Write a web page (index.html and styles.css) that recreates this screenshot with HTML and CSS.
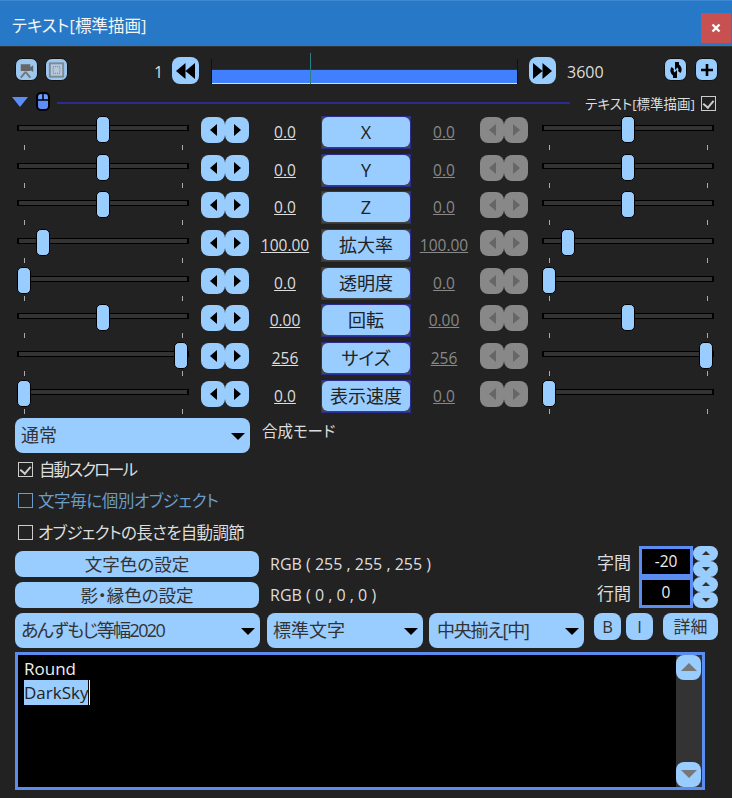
FILE: index.html
```html
<!DOCTYPE html>
<html lang="ja">
<head>
    <meta charset="UTF-8">
    <title>テキスト[標準描画]</title>
    <link rel="stylesheet" href="styles.css">
</head>
<body>
    <div class="titlebar">
        <span class="title">テキスト[標準描画]</span>
        <div class="close">
            <svg width="10" height="10" viewBox="0 0 10 10"><path d="M1.5 1.5 8.5 8.5M8.5 1.5 1.5 8.5" stroke="#fff" stroke-width="2.4"/></svg>
        </div>
    </div>

    <div class="toolbar">
        <div class="icon-btn dim">
            <svg width="22" height="22" viewBox="0 0 22 22"><path d="M5 5h10v3l3-2v7l-3-2v1H5z" fill="#666"/><path d="M10 13 5 19M10 13l5 6" stroke="#777" stroke-width="2"/></svg>
        </div>
        <div class="icon-btn dim">
            <svg width="22" height="22" viewBox="0 0 22 22"><rect x="4" y="4" width="14" height="14" fill="#b4c8dc" stroke="#808890" stroke-width="2"/><rect x="7.5" y="7.5" width="7" height="7" fill="none" stroke="#778" stroke-dasharray="1 1"/></svg>
        </div>
        <span class="frame-start">1</span>
        <div class="jump-btn">
            <svg width="19" height="16" viewBox="0 0 19 16"><path d="M9.5 0v16L0 8zM19 0v16L9.5 8z" fill="#000"/></svg>
        </div>
        <div class="timeline">
            <div class="cursor"></div>
            <div class="range"></div>
        </div>
        <div class="jump-btn">
            <svg width="19" height="16" viewBox="0 0 19 16"><path d="M0 0v16L9.5 8zM9.5 0v16L19 8z" fill="#000"/></svg>
        </div>
        <span class="frame-end">3600</span>
        <div class="icon-btn loop">
            <svg width="16" height="16" viewBox="0 0 16 16"><path d="M11 0v2.500A6 6 0 0 1 12.500 11L10 9a3 3 0 0 0-.5-3.500L7 8V0zM5 16v-2.500A6 6 0 0 1 3.500 5L6 7a3 3 0 0 0 .5 3.500L9 8v8z" fill="#000"/></svg>
        </div>
        <div class="icon-btn">
            <svg width="14" height="14" viewBox="0 0 14 14"><path d="M7 1v12M1 7h12" stroke="#000" stroke-width="2.6"/></svg>
        </div>
    </div>

    <div class="group-row">
        <span class="fold"></span>
        <svg class="mouse" width="14" height="19" viewBox="0 0 14 19"><rect x="1" y="1" width="12" height="17" rx="4" fill="#5b8cf8" stroke="#000" stroke-width="2"/><path d="M1 8h12M7 1v7" stroke="#000" stroke-width="1.500"/><path d="M3 3h3v4H3zM8 3h3v4H8z" fill="#6f9ff8"/></svg>
        <div class="group-line"></div>
        <span class="group-name">テキスト[標準描画]</span>
        <span class="check on small"></span>
    </div>

    <div class="params">
        <div class="slider"><span class="track"></span><span class="thumb" style="--pos: 0.5"></span><i class="tick"></i><i class="tick"></i></div>
        <div class="arrows"><span class="arrow left"></span><span class="arrow right"></span></div>
        <a class="value">0.0</a>
        <div class="param-btn"><span>X</span></div>
        <a class="value muted">0.0</a>
        <div class="arrows off"><span class="arrow left"></span><span class="arrow right"></span></div>
        <div class="slider"><span class="track"></span><span class="thumb" style="--pos: 0.5"></span><i class="tick"></i><i class="tick"></i></div>

        <div class="slider"><span class="track"></span><span class="thumb" style="--pos: 0.5"></span><i class="tick"></i><i class="tick"></i></div>
        <div class="arrows"><span class="arrow left"></span><span class="arrow right"></span></div>
        <a class="value">0.0</a>
        <div class="param-btn"><span>Y</span></div>
        <a class="value muted">0.0</a>
        <div class="arrows off"><span class="arrow left"></span><span class="arrow right"></span></div>
        <div class="slider"><span class="track"></span><span class="thumb" style="--pos: 0.5"></span><i class="tick"></i><i class="tick"></i></div>

        <div class="slider"><span class="track"></span><span class="thumb" style="--pos: 0.5"></span><i class="tick"></i><i class="tick"></i></div>
        <div class="arrows"><span class="arrow left"></span><span class="arrow right"></span></div>
        <a class="value">0.0</a>
        <div class="param-btn"><span>Z</span></div>
        <a class="value muted">0.0</a>
        <div class="arrows off"><span class="arrow left"></span><span class="arrow right"></span></div>
        <div class="slider"><span class="track"></span><span class="thumb" style="--pos: 0.5"></span><i class="tick"></i><i class="tick"></i></div>

        <div class="slider"><span class="track"></span><span class="thumb" style="--pos: 0.12"></span><i class="tick"></i><i class="tick"></i></div>
        <div class="arrows"><span class="arrow left"></span><span class="arrow right"></span></div>
        <a class="value">100.00</a>
        <div class="param-btn"><span>拡大率</span></div>
        <a class="value muted">100.00</a>
        <div class="arrows off"><span class="arrow left"></span><span class="arrow right"></span></div>
        <div class="slider"><span class="track"></span><span class="thumb" style="--pos: 0.12"></span><i class="tick"></i><i class="tick"></i></div>

        <div class="slider"><span class="track"></span><span class="thumb" style="--pos: 0"></span><i class="tick"></i><i class="tick"></i></div>
        <div class="arrows"><span class="arrow left"></span><span class="arrow right"></span></div>
        <a class="value">0.0</a>
        <div class="param-btn"><span>透明度</span></div>
        <a class="value muted">0.0</a>
        <div class="arrows off"><span class="arrow left"></span><span class="arrow right"></span></div>
        <div class="slider"><span class="track"></span><span class="thumb" style="--pos: 0"></span><i class="tick"></i><i class="tick"></i></div>

        <div class="slider"><span class="track"></span><span class="thumb" style="--pos: 0.5"></span><i class="tick"></i><i class="tick"></i></div>
        <div class="arrows"><span class="arrow left"></span><span class="arrow right"></span></div>
        <a class="value">0.00</a>
        <div class="param-btn"><span>回転</span></div>
        <a class="value muted">0.00</a>
        <div class="arrows off"><span class="arrow left"></span><span class="arrow right"></span></div>
        <div class="slider"><span class="track"></span><span class="thumb" style="--pos: 0.5"></span><i class="tick"></i><i class="tick"></i></div>

        <div class="slider"><span class="track"></span><span class="thumb" style="--pos: 1"></span><i class="tick"></i><i class="tick"></i></div>
        <div class="arrows"><span class="arrow left"></span><span class="arrow right"></span></div>
        <a class="value">256</a>
        <div class="param-btn"><span>サイズ</span></div>
        <a class="value muted">256</a>
        <div class="arrows off"><span class="arrow left"></span><span class="arrow right"></span></div>
        <div class="slider"><span class="track"></span><span class="thumb" style="--pos: 1"></span><i class="tick"></i><i class="tick"></i></div>

        <div class="slider"><span class="track"></span><span class="thumb" style="--pos: 0"></span><i class="tick"></i><i class="tick"></i></div>
        <div class="arrows"><span class="arrow left"></span><span class="arrow right"></span></div>
        <a class="value">0.0</a>
        <div class="param-btn"><span>表示速度</span></div>
        <a class="value muted">0.0</a>
        <div class="arrows off"><span class="arrow left"></span><span class="arrow right"></span></div>
        <div class="slider"><span class="track"></span><span class="thumb" style="--pos: 0"></span><i class="tick"></i><i class="tick"></i></div>
    </div>

    <div class="blend-row">
        <div class="select blend">通常<span class="caret"></span></div>
        <span class="blend-label">合成モード</span>
    </div>

    <div class="check-row first"><span class="check on"></span>自動スクロール</div>
    <div class="check-row blue"><span class="check"></span>文字毎に個別オブジェクト</div>
    <div class="check-row last"><span class="check"></span>オブジェクトの長さを自動調節</div>

    <div class="color-area">
        <div class="color-rows">
            <div class="color-row"><div class="wide-btn">文字色の設定</div><span class="rgb">RGB ( 255 , 255 , 255 )</span></div>
            <div class="color-row"><div class="wide-btn">影・縁色の設定</div><span class="rgb">RGB ( 0 , 0 , 0 )</span></div>
        </div>
        <div class="spin-rows">
            <div class="spin-row">
                <span class="spin-label">字間</span>
                <div class="spin-input">-20</div>
                <div class="spin"><span class="up"></span><span class="down"></span></div>
            </div>
            <div class="spin-row">
                <span class="spin-label">行間</span>
                <div class="spin-input">0</div>
                <div class="spin"><span class="up"></span><span class="down"></span></div>
            </div>
        </div>
    </div>

    <div class="font-row">
        <div class="select font">あんずもじ等幅2020<span class="caret"></span></div>
        <div class="select style">標準文字<span class="caret"></span></div>
        <div class="select align">中央揃え[中]<span class="caret"></span></div>
        <div class="small-btn bold">B</div>
        <div class="small-btn italic">I</div>
        <div class="small-btn detail">詳細</div>
    </div>

    <div class="editor">
        <div class="editor-text">
            <div class="line">Round</div>
            <div class="line"><span class="selected">DarkSky</span><span class="text-cursor"></span></div>
        </div>
        <div class="scrollbar">
            <div class="scroll-btn"><span class="scroll-up"></span></div>
            <div class="scroll-btn"><span class="scroll-down"></span></div>
        </div>
    </div>
</body>
</html>
```

FILE: styles.css
```css
* {
    box-sizing: border-box;
}

body {
    margin: 0;
    width: 732px;
    height: 798px;
    overflow: hidden;
    background-color: #222;
    color: #ddd;
    font-family: "Open Sans", "Noto Sans CJK JP", sans-serif;
    font-size: 16px;
    font-feature-settings: "palt";
}

/* title bar */
.titlebar {
    height: 47px;
    background-color: #2878c8;
    border-top: 1px solid #3d88d2;
    border-bottom: 1px solid #333;
    display: flex;
    justify-content: space-between;
    padding: 12px 1px 0 12px;
    color: #f4f4f4;
}

.title {
    font-size: 16.5px;
    line-height: 25px;
}

.close {
    width: 30px;
    height: 30px;
    background-color: #c75050;
    display: flex;
    align-items: center;
    justify-content: center;
}

/* top toolbar */
.toolbar {
    height: 43px;
    padding: 10px 0 0 15px;
    display: flex;
    align-items: flex-start;
}

.icon-btn {
    width: 23px;
    height: 23px;
    border-radius: 7px;
    background-color: #99ccff;
    border: 1px solid #111;
    display: flex;
    align-items: center;
    justify-content: center;
    margin-top: 1px;
    margin-right: 8px;
}

.icon-btn.dim {
    background-color: #9cc8f0;
    margin-right: 7px;
}

.icon-btn.loop {
    margin-left: 60px;
}

.frame-start {
    margin-left: 79px;
    width: 18px;
    line-height: 28px;
    margin-top: 1px;
}

.jump-btn {
    width: 27px;
    height: 27px;
    border-radius: 8px;
    background-color: #99ccff;
    display: flex;
    align-items: center;
    justify-content: center;
}

.timeline {
    position: relative;
    width: 307px;
    height: 25px;
    margin: 2px 11px 0 12px;
    border-left: 1px solid #111;
    border-right: 1px solid #111;
    padding-top: 10px;
}

.timeline .range {
    height: 15px;
    background-color: #4080ff;
    border-top: 1px solid #1a2f60;
    border-bottom: 1px solid #ddd;
}

.timeline .cursor {
    position: absolute;
    left: 98px;
    top: -6px;
    width: 1px;
    height: 31px;
    background-color: #2a8080;
    z-index: 1;
}

.frame-end {
    margin-left: 11px;
    line-height: 28px;
    margin-top: 1px;
    width: 37px;
}

/* object group */
.group-row {
    height: 26px;
    padding: 0 16px 0 12px;
    display: flex;
    align-items: center;
}

.fold {
    width: 0;
    height: 0;
    border-left: 8.5px solid transparent;
    border-right: 8.5px solid transparent;
    border-top: 10px solid #5b8cf8;
    margin-top: -3px;
}

.mouse {
    margin-left: 8px;
    margin-top: -4px;
}

.group-line {
    flex: 1;
    height: 2px;
    margin: -1px 15px 0 7px;
    background-color: #2c2c90;
}

.group-name {
    font-size: 13.5px;
    line-height: 20px;
    margin-top: 2px;
    margin-right: 6px;
}

/* parameter rows */
.params {
    padding-left: 15px;
    display: grid;
    grid-template-columns: 175px 59px 72px 90px 66px 51px 188px;
    grid-auto-rows: 37.7px;
}

.slider {
    position: relative;
    width: 175px;
    height: 37px;
    display: flex;
    justify-content: space-between;
    justify-self: end;
    padding: 29px 7px 0 9px;
}

.slider:nth-child(7n) {
    margin-right: 1px;
}

.track {
    position: absolute;
    left: 2px;
    right: 1px;
    top: 9px;
    height: 6px;
    background-color: #333;
    border: 1px solid #000;
    border-left-width: 2px;
    border-right-width: 2px;
}

.thumb {
    position: absolute;
    top: 0;
    left: calc(2px + var(--pos) * 157px);
    width: 14px;
    height: 27px;
    background-color: #99ccff;
    border: 1px solid #000;
    border-radius: 5px;
}

.tick {
    width: 1px;
    height: 5px;
    background-color: #aaa;
}

.arrows {
    display: flex;
    justify-content: flex-end;
    align-items: flex-start;
    padding-top: 1px;
}

.arrow {
    width: 24px;
    height: 26px;
    background-color: #99ccff;
    border-radius: 8px;
    display: flex;
    align-items: center;
    justify-content: center;
}

.arrow::before {
    content: "";
    border-top: 6.5px solid transparent;
    border-bottom: 6.5px solid transparent;
}

.arrow.left::before {
    border-right: 7px solid #000;
}

.arrow.right::before {
    border-left: 7px solid #000;
}

.arrows.off .arrow {
    background-color: #888;
}

.arrows.off .arrow.left::before {
    border-right-color: #666;
}

.arrows.off .arrow.right::before {
    border-left-color: #666;
}

.value {
    text-align: center;
    text-decoration: underline;
    font-size: 15.5px;
    line-height: 33px;
    color: #ddd;
}

.value.muted {
    color: #888;
}

.param-btn {
    height: 33px;
    background-color: #444;
    border: 1px solid #2c2c90;
    padding-bottom: 1px;
}

.param-btn span {
    display: block;
    height: 100%;
    background-color: #99ccff;
    border-radius: 6px;
    color: #222;
    text-align: center;
    font-size: 18px;
    line-height: 31px;
}

/* blend mode */
.blend-row {
    padding-left: 15px;
    display: flex;
}

.select {
    position: relative;
    height: 35px;
    background-color: #99ccff;
    border-radius: 8px;
    color: #333;
    font-size: 18px;
    line-height: 35px;
    padding-left: 6px;
}

.caret {
    position: absolute;
    right: 5px;
    top: 15px;
    border-left: 7.5px solid transparent;
    border-right: 7.5px solid transparent;
    border-top: 7px solid #000;
}

.select.blend {
    width: 235px;
}

.blend-label {
    margin-left: 12px;
    font-size: 15.5px;
    line-height: 27px;
}

.check-row {
    display: flex;
    align-items: center;
    height: 31px;
    padding-left: 18px;
    font-size: 16.5px;
}

.check-row.first {
    margin-top: 1px;
    letter-spacing: -1.9px;
}

.check-row.first .check {
    margin-right: 6px;
}

.check-row.blue {
    color: #6a9cc8;
    letter-spacing: -0.4px;
}

.check-row.blue .check {
    border-color: #6a9cc8;
    margin-right: 5px;
}

.check-row.last {
    height: 32px;
    padding-top: 1px;
    letter-spacing: -0.65px;
}

.check-row.last .check {
    margin-right: 5px;
}

.check {
    width: 15px;
    height: 15px;
    border: 1px solid #ccc;
    margin-right: 7px;
    position: relative;
    flex-shrink: 0;
}

.check.small {
    margin-right: 0;
}

.check.on::after {
    content: "";
    position: absolute;
    left: 3px;
    top: 1px;
    width: 5px;
    height: 8px;
    border-right: 2px solid #ccc;
    border-bottom: 2px solid #ccc;
    transform: rotate(40deg);
}

/* colours and spacing */
.color-area {
    display: flex;
    padding: 0 14px 0 15px;
    justify-content: space-between;
    height: 65px;
}

.color-rows {
    padding-top: 3px;
}

.color-row {
    display: flex;
    align-items: center;
    height: 26px;
    margin-bottom: 5px;
}

.wide-btn {
    width: 244px;
    height: 26px;
    background-color: #99ccff;
    border-radius: 8px;
    color: #333;
    text-align: center;
    line-height: 26px;
    font-size: 17.5px;
}

.rgb {
    margin-left: 11px;
    font-size: 16px;
}

.spin-rows {
    margin-top: -2px;
}

.spin-row {
    display: flex;
    align-items: center;
    height: 31px;
}

.spin-label {
    font-size: 17px;
    width: 42px;
}

.spin-input {
    width: 54px;
    height: 31px;
    background-color: #000;
    border: 3px solid #5b8cf0;
    text-align: center;
    line-height: 25px;
    color: #eee;
    font-size: 15.5px;
}

.spin {
    width: 25px;
    display: flex;
    flex-direction: column;
}

.spin span {
    height: 15.5px;
    background-color: #99ccff;
    border-radius: 8px;
    display: flex;
    align-items: center;
    justify-content: center;
}

.spin span::before {
    content: "";
    border-left: 4.5px solid transparent;
    border-right: 4.5px solid transparent;
}

.spin .up::before {
    border-bottom: 4px solid #333;
}

.spin .down::before {
    border-top: 4px solid #333;
}

/* font row */
.font-row {
    display: flex;
    padding-left: 15px;
    height: 39px;
    align-items: flex-start;
}

.select.font {
    width: 245px;
    letter-spacing: -1.6px;
}

.select.style {
    width: 156px;
    margin-left: 7px;
}

.select.align {
    width: 155px;
    margin-left: 6px;
    padding-left: 8px;
    letter-spacing: -1.2px;
}

.small-btn {
    height: 27px;
    background-color: #99ccff;
    border-radius: 8px;
    color: #333;
    text-align: center;
    line-height: 27px;
    font-size: 16.5px;
}

.small-btn.bold {
    width: 27px;
    margin-left: 10px;
}

.small-btn.italic {
    width: 27px;
    margin-left: 5px;
}

.small-btn.detail {
    width: 55px;
    margin-left: 10px;
    font-size: 17px;
}

/* text editor */
.editor {
    margin-left: 15px;
    width: 690px;
    height: 138px;
    background-color: #000;
    border: 3px solid #5b8cf0;
    display: flex;
    justify-content: space-between;
}

.editor-text {
    color: #eee;
    font-size: 17px;
    padding-left: 6px;
}

.line {
    height: 25px;
    line-height: 25px;
    display: flex;
}

.line:first-child {
    padding-top: 1px;
}

.selected {
    background-color: #99ccff;
    color: #222;
}

.text-cursor {
    width: 1px;
    margin-left: 1px;
    background-color: #eee;
}

.scrollbar {
    width: 26px;
    background-color: #333;
    display: flex;
    flex-direction: column;
    justify-content: space-between;
    padding-right: 1px;
}

.scroll-btn {
    height: 25px;
    background-color: #99ccff;
    border-radius: 8px;
    display: flex;
    align-items: center;
    justify-content: center;
}

.scroll-up {
    border-left: 8px solid transparent;
    border-right: 8px solid transparent;
    border-bottom: 8px solid #777;
}

.scroll-down {
    border-left: 8px solid transparent;
    border-right: 8px solid transparent;
    border-top: 8px solid #777;
}
```
